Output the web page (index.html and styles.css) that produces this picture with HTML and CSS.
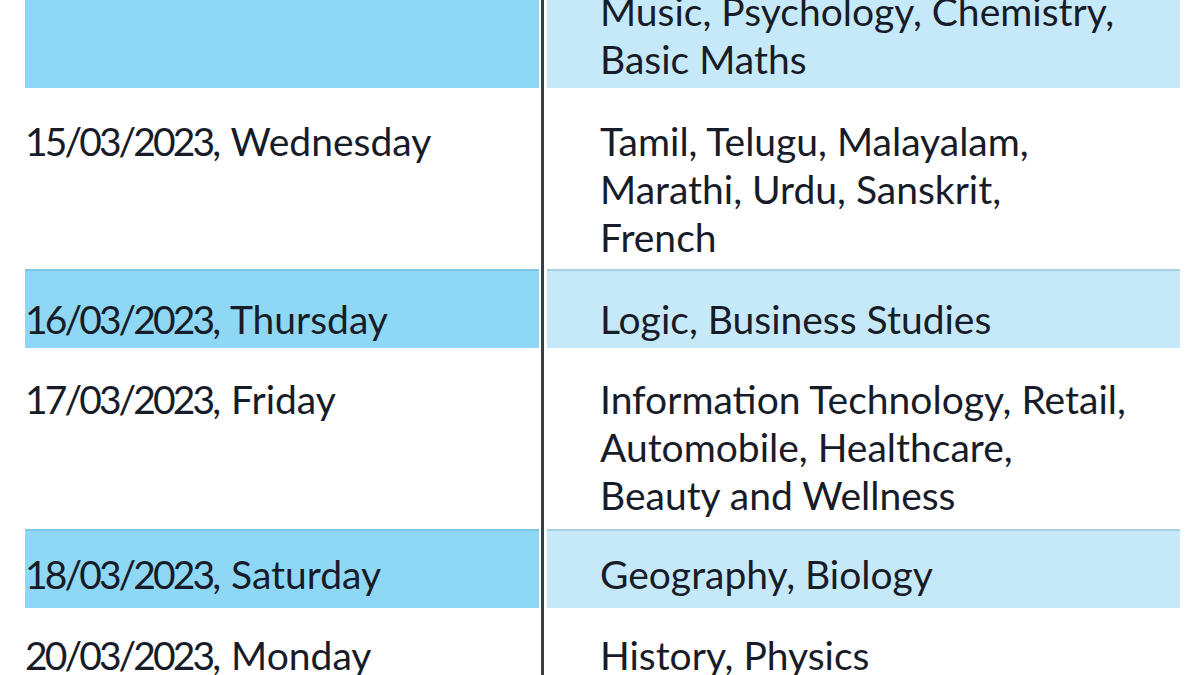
FILE: index.html
```html
<!DOCTYPE html>
<html lang="en">
<head>
<meta charset="utf-8">
<title>Exam Timetable</title>
<link rel="stylesheet" href="styles.css">
</head>
<body>
<div class="timetable">
  <div class="divider"></div>

  <div class="cell date blue"><span class="num">14/03/2023</span>, Tuesday</div>
  <div class="cell subj blue">Karnataka Music, Hindustani<br>Music, Psychology, Chemistry,<br>Basic Maths</div>

  <div class="cell date"><span class="num">15/03/2023</span>, Wednesday</div>
  <div class="cell subj">Tamil, Telugu, Malayalam,<br>Marathi, Urdu, Sanskrit,<br>French</div>

  <div class="cell date blue"><span class="num">16/03/2023</span>, Thursday</div>
  <div class="cell subj blue">Logic, Business Studies</div>

  <div class="cell date r4"><span class="num">17/03/2023</span>, Friday</div>
  <div class="cell subj r4">Information Technology, Retail,<br>Automobile, Healthcare,<br>Beauty and Wellness</div>

  <div class="cell date blue r5"><span class="num">18/03/2023</span>, Saturday</div>
  <div class="cell subj blue r5">Geography, Biology</div>

  <div class="cell date r6"><span class="num">20/03/2023</span>, Monday</div>
  <div class="cell subj r6">History, Physics</div>
</div>
</body>
</html>
```
FILE: styles.css
```css
html, body {
  margin: 0;
  padding: 0;
  background: #ffffff;
  overflow: hidden;
}

.timetable {
  display: grid;
  grid-template-columns: 514px 8px 633px;
  row-gap: 3px;
  margin-top: -87px;
  margin-left: 25px;
  font-family: Lato, "Noto Sans", sans-serif;
  font-size: 39px;
  line-height: 48px;
  color: #171c28;
  white-space: nowrap;
}

.divider {
  grid-column: 2;
  grid-row: 1 / span 6;
  justify-self: center;
  width: 3px;
  background: #3a3e45;
  margin-left: -1px;
}

.cell {
  padding: 26px 0 5px 0;
}

.cell.r4 {
  padding-top: 24px;
  padding-bottom: 7px;
}

.cell.r5 {
  padding-top: 21px;
  padding-bottom: 10px;
}

.cell.r6 {
  padding-top: 20px;
  padding-bottom: 11px;
}

.date {
  grid-column: 1;
}

.num {
  letter-spacing: -2.9px;
}

.subj {
  grid-column: 3;
  padding-left: 53px;
}

.date.blue {
  background: #8ed8f6;
  box-shadow: inset 0 2px 0 #7fc4e2;
}

.subj.blue {
  background: #c6e9f9;
  box-shadow: inset 0 2px 0 #a9cfe2;
}
```
